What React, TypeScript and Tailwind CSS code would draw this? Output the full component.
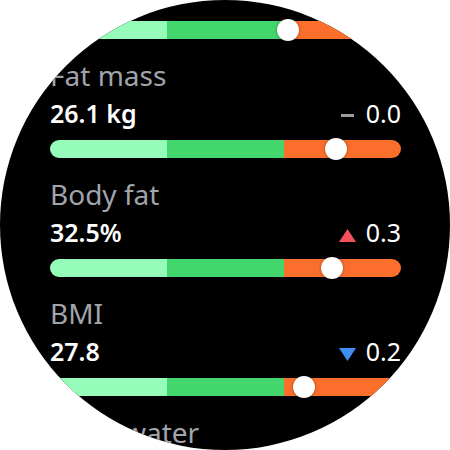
import React from "react";

type Trend = "up" | "down" | "flat";

interface Item {
  label: string;
  value: string;
  delta: string;
  trend: Trend;
  thumb: number; // thumb center x within bar (px)
}

const items: Item[] = [
  { label: "Weight", value: "79.6 kg", delta: "0.4", trend: "up", thumb: 238 },
  { label: "Fat mass", value: "26.1 kg", delta: "0.0", trend: "flat", thumb: 286 },
  { label: "Body fat", value: "32.5%", delta: "0.3", trend: "up", thumb: 282 },
  { label: "BMI", value: "27.8", delta: "0.2", trend: "down", thumb: 254 },
  { label: "Body water", value: "38.4 L", delta: "0.1", trend: "down", thumb: 200 },
];

function TrendMark({ trend }: { trend: Trend }) {
  if (trend === "flat") {
    return <div className="w-[13px] h-[3px] bg-[#9c9c9c] translate-y-[2px] mr-[2px]" />;
  }
  if (trend === "up") {
    return (
      <svg width="17" height="13" viewBox="0 0 17 13" className="translate-y-[3px]">
        <polygon points="8.5,0 17,13 0,13" fill="#f4525b" />
      </svg>
    );
  }
  return (
    <svg width="17" height="13" viewBox="0 0 17 13" className="translate-y-[3px]">
      <polygon points="0,0 17,0 8.5,13" fill="#3e8ff2" />
    </svg>
  );
}

function Row({ item }: { item: Item }) {
  return (
    <div className="pt-[20px]">
      <div className="h-[32px] leading-[32px] text-[28px] text-[#a0a4ab] whitespace-nowrap">
        {item.label}
      </div>
      <div className="mt-[6px] h-[32px] flex items-center justify-between">
        <div className="leading-[32px] text-[25px] font-semibold text-white whitespace-nowrap">
          {item.value}
        </div>
        <div className="flex items-center gap-[10px]">
          <TrendMark trend={item.trend} />
          <div className="leading-[32px] text-[25px] text-white">{item.delta}</div>
        </div>
      </div>
      <div className="relative mt-[11px] h-[18px] flex">
        <div className="flex-1 bg-[#95fdb9] rounded-l-full" />
        <div className="flex-1 bg-[#43d66d]" />
        <div className="flex-1 bg-[#fc6e2b] rounded-r-full" />
        <div
          className="absolute top-[-2px] w-[22px] h-[22px] rounded-full bg-white shadow-[0_0_3px_rgba(0,0,0,0.45)]"
          style={{ left: item.thumb - 11 }}
        />
      </div>
    </div>
  );
}

export default function App() {
  return (
    <div
      className="w-[450px] h-[450px] bg-white"
      style={{ fontFamily: '"Noto Sans", "Open Sans", sans-serif' }}
    >
      <div className="w-[450px] h-[450px] rounded-full overflow-hidden bg-black">
        <div className="pl-[50px] pr-[49px] -mt-[80px]">
          {items.map((it) => (
            <Row key={it.label} item={it} />
          ))}
        </div>
      </div>
    </div>
  );
}
